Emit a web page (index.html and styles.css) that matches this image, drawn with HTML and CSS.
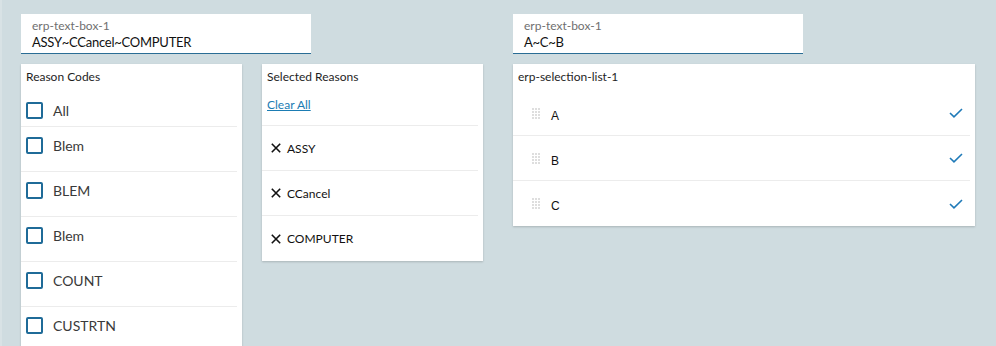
FILE: index.html
```html
<!DOCTYPE html>
<html lang="en">
<head>
<meta charset="utf-8">
<title>Reason Codes</title>
<link rel="stylesheet" href="styles.css">
</head>
<body>
<div class="page">
  <div class="col">
    <div class="textbox">
      <div class="tb-label">erp-text-box-1</div>
      <div class="tb-value">ASSY~CCancel~COMPUTER</div>
    </div>
    <div class="cards">
      <div class="card card-reasons">
        <div class="card-title">Reason Codes</div>
        <div class="check-row first"><span class="checkbox"></span><span class="check-label">All</span></div>
        <div class="check-row"><span class="checkbox"></span><span class="check-label">Blem</span></div>
        <div class="check-row"><span class="checkbox"></span><span class="check-label">BLEM</span></div>
        <div class="check-row"><span class="checkbox"></span><span class="check-label">Blem</span></div>
        <div class="check-row"><span class="checkbox"></span><span class="check-label">COUNT</span></div>
        <div class="check-row"><span class="checkbox"></span><span class="check-label">CUSTRTN</span></div>
      </div>
      <div class="card card-selected">
        <div class="card-title">Selected Reasons</div>
        <div class="clear-row"><a class="clear-link" href="#">Clear All</a></div>
        <div class="sel-row"><svg class="x-icon" width="10" height="10" viewBox="0 0 10 10"><path d="M0.8 0.8L9.2 9.2M9.2 0.8L0.8 9.2"/></svg><span>ASSY</span></div>
        <div class="sel-row"><svg class="x-icon" width="10" height="10" viewBox="0 0 10 10"><path d="M0.8 0.8L9.2 9.2M9.2 0.8L0.8 9.2"/></svg><span>CCancel</span></div>
        <div class="sel-row last"><svg class="x-icon" width="10" height="10" viewBox="0 0 10 10"><path d="M0.8 0.8L9.2 9.2M9.2 0.8L0.8 9.2"/></svg><span>COMPUTER</span></div>
      </div>
    </div>
  </div>
  <div class="col">
    <div class="textbox">
      <div class="tb-label">erp-text-box-1</div>
      <div class="tb-value">A~C~B</div>
    </div>
    <div class="card card-list">
      <div class="card-title">erp-selection-list-1</div>
      <div class="list">
        <div class="list-row">
          <svg class="handle" width="8" height="11" viewBox="0 0 8 11"><g><rect x="0" y="0" width="2" height="2"/><rect x="3" y="0" width="2" height="2"/><rect x="6" y="0" width="2" height="2"/><rect x="0" y="3" width="2" height="2"/><rect x="3" y="3" width="2" height="2"/><rect x="6" y="3" width="2" height="2"/><rect x="0" y="6" width="2" height="2"/><rect x="3" y="6" width="2" height="2"/><rect x="6" y="6" width="2" height="2"/><rect x="0" y="9" width="2" height="2"/><rect x="3" y="9" width="2" height="2"/><rect x="6" y="9" width="2" height="2"/></g></svg>
          <span class="list-text">A</span>
          <svg class="check" width="14" height="10" viewBox="0 0 14 10"><path d="M1 5L5 8.8L13 1"/></svg>
        </div>
        <div class="list-row">
          <svg class="handle" width="8" height="11" viewBox="0 0 8 11"><g><rect x="0" y="0" width="2" height="2"/><rect x="3" y="0" width="2" height="2"/><rect x="6" y="0" width="2" height="2"/><rect x="0" y="3" width="2" height="2"/><rect x="3" y="3" width="2" height="2"/><rect x="6" y="3" width="2" height="2"/><rect x="0" y="6" width="2" height="2"/><rect x="3" y="6" width="2" height="2"/><rect x="6" y="6" width="2" height="2"/><rect x="0" y="9" width="2" height="2"/><rect x="3" y="9" width="2" height="2"/><rect x="6" y="9" width="2" height="2"/></g></svg>
          <span class="list-text">B</span>
          <svg class="check" width="14" height="10" viewBox="0 0 14 10"><path d="M1 5L5 8.8L13 1"/></svg>
        </div>
        <div class="list-row last">
          <svg class="handle" width="8" height="11" viewBox="0 0 8 11"><g><rect x="0" y="0" width="2" height="2"/><rect x="3" y="0" width="2" height="2"/><rect x="6" y="0" width="2" height="2"/><rect x="0" y="3" width="2" height="2"/><rect x="3" y="3" width="2" height="2"/><rect x="6" y="3" width="2" height="2"/><rect x="0" y="6" width="2" height="2"/><rect x="3" y="6" width="2" height="2"/><rect x="6" y="6" width="2" height="2"/><rect x="0" y="9" width="2" height="2"/><rect x="3" y="9" width="2" height="2"/><rect x="6" y="9" width="2" height="2"/></g></svg>
          <span class="list-text">C</span>
          <svg class="check" width="14" height="10" viewBox="0 0 14 10"><path d="M1 5L5 8.8L13 1"/></svg>
        </div>
      </div>
    </div>
  </div>
</div>
</body>
</html>
```
FILE: styles.css
```css
html, body {
  margin: 0;
  padding: 0;
  height: 100%;
  overflow: hidden;
}
body {
  background: #cfdce0;
  font-family: Lato, "Open Sans", sans-serif;
  color: #222;
  border-left: 2px solid #d8e2e5;
  box-sizing: border-box;
}
.page {
  display: grid;
  grid-template-columns: 462px 462px;
  column-gap: 30px;
  padding: 14px 0 0 19px;
  align-items: start;
}
.col {
  display: flex;
  flex-direction: column;
  gap: 10px;
}
.textbox {
  width: 290px;
  height: 40px;
  box-sizing: border-box;
  background: #fff;
  border-bottom: 1px solid #2a6d95;
  padding: 5px 11px 0;
}
.tb-label {
  font-size: 12px;
  line-height: 14px;
  color: #6f6f6f;
}
.tb-value {
  font-size: 13px;
  line-height: 18px;
  letter-spacing: -0.25px;
  color: #111;
}
.cards {
  display: flex;
  gap: 20px;
  align-items: flex-start;
}
.card {
  background: #fff;
  box-shadow: 0 1px 2px rgba(0, 0, 0, 0.18);
}
.card-reasons, .card-selected {
  width: 221px;
}
.card-title {
  font-size: 12px;
  line-height: 16px;
  color: #1e1e1e;
  padding: 5px 5px 0;
}
.check-row {
  display: flex;
  align-items: center;
  gap: 10px;
  padding: 10px 0 17px 5px;
  margin-right: 5px;
  border-bottom: 1px solid #ececec;
}
.check-row.first {
  padding-top: 17px;
  padding-bottom: 7px;
}
.checkbox {
  width: 17px;
  height: 17px;
  box-sizing: border-box;
  border: 2px solid #1f6b98;
  border-radius: 2px;
  flex: none;
}
.check-label {
  font-size: 14px;
  line-height: 17px;
  color: #3a3a3a;
}
.clear-row {
  height: 41px;
  box-sizing: border-box;
  padding: 12px 0 0 5px;
  margin-right: 5px;
  border-bottom: 1px solid #ececec;
  font-size: 12px;
  line-height: 16px;
}
.clear-link {
  color: #1b7cb3;
  text-decoration: underline;
}
.sel-row {
  display: flex;
  align-items: center;
  gap: 6px;
  height: 45px;
  box-sizing: border-box;
  padding-left: 9px;
  margin-right: 5px;
  border-bottom: 1px solid #ececec;
  font-size: 12px;
  color: #111;
}
.sel-row.last {
  border-bottom: none;
}
.x-icon {
  flex: none;
}
.x-icon path {
  stroke: #111;
  stroke-width: 1.6;
  fill: none;
}
.card-list {
  width: 462px;
}
.list {
  margin-top: 6px;
}
.list-row {
  display: flex;
  align-items: center;
  height: 45px;
  box-sizing: border-box;
  padding: 0 7px 0 19px;
  margin-right: 5px;
  border-bottom: 1px solid #ececec;
}
.list-row.last {
  border-bottom: none;
}
.handle {
  flex: none;
  fill: #dedede;
}
.list-text {
  flex: 1;
  margin-left: 11px;
  padding-top: 5px;
  font-family: "Liberation Sans", Arial, sans-serif;
  font-size: 12px;
  color: #111;
}
.check {
  flex: none;
}
.check path {
  stroke: #1f7ab8;
  stroke-width: 1.6;
  fill: none;
}
```
